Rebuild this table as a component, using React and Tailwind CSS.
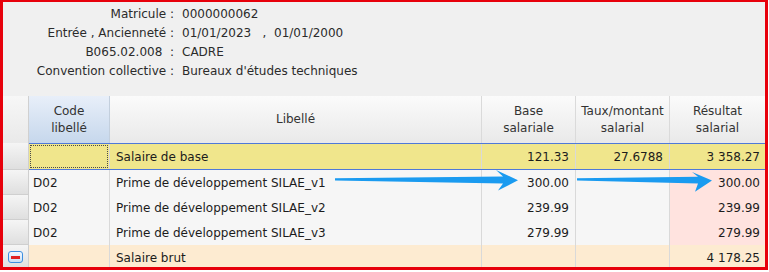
import React from 'react';

const info = [
  ['Matricule :', '0000000062'],
  ['Entrée , Ancienneté :', '01/01/2023   ,  01/01/2000'],
  ['B065.02.008  :', 'CADRE'],
  ['Convention collective :', "Bureaux d'études techniques"],
];

const rows = [
  { code: '', label: 'Salaire de base', base: '121.33', taux: '27.6788', res: '3 358.27', kind: 'base' },
  { code: 'D02', label: 'Prime de développement SILAE_v1', base: '300.00', taux: '', res: '300.00', kind: 'prime' },
  { code: 'D02', label: 'Prime de développement SILAE_v2', base: '239.99', taux: '', res: '239.99', kind: 'prime' },
  { code: 'D02', label: 'Prime de développement SILAE_v3', base: '279.99', taux: '', res: '279.99', kind: 'prime' },
  { code: '', label: 'Salaire brut', base: '', taux: '', res: '4 178.25', kind: 'brut' },
];

const cols = 'grid grid-cols-[26px_81px_372px_94px_94px_95px]';

const cellBg = (kind, isRes) => {
  if (kind === 'base') return 'bg-[#f0e68c]';
  if (kind === 'brut') return 'bg-[#fdebd1]';
  return isRes ? 'bg-[#ffe3df]' : 'bg-[#f6f6f6]';
};

function MinusIcon() {
  return (
    <div className="w-[15px] h-[12px] rounded-[3px] border border-[#3d8fe0] bg-linear-to-b from-[#f4f9ff] to-[#c9e0f7] flex items-center justify-center">
      <div className="w-[9px] h-[3px] bg-[#e02424]" />
    </div>
  );
}

function Row({ r }) {
  const sel = r.kind === 'base';
  const h = sel ? 'h-[27px] border-y border-[#4f79d9]' : 'h-[25px]';
  return (
    <div className={cols}>
      <div className={`${sel ? 'h-[27px]' : 'h-[25px]'} border-r border-b border-[#cfcfcf] bg-linear-to-b from-[#f5f5f5] to-[#dfdfdf] flex items-center justify-center`}>
        {r.kind === 'brut' && <MinusIcon />}
      </div>
      <div className={`col-span-5 grid grid-cols-[81px_372px_94px_94px_95px] ${h}`}>
        <div className={`${cellBg(r.kind)} border-r border-[#d9d9d9] flex items-center pl-[4px] relative`}>
          {sel && <div className="absolute left-[1px] right-[1px] top-[1px] bottom-[1px] border border-dotted border-[#4a4a4a]" />}
          {r.code}
        </div>
        <div className={`${cellBg(r.kind)} border-r border-[#d9d9d9] flex items-center pl-[6px]`}>{r.label}</div>
        <div className={`${cellBg(r.kind)} border-r border-[#d9d9d9] flex items-center justify-end pr-[6px]`}>{r.base}</div>
        <div className={`${cellBg(r.kind)} border-r border-[#d9d9d9] flex items-center justify-end pr-[6px]`}>{r.taux}</div>
        <div className={`${cellBg(r.kind, true)} flex items-center justify-end pr-[5px]`}>{r.res}</div>
      </div>
    </div>
  );
}

export default function App() {
  return (
    <div className="w-[769px] h-[272px] bg-white">
      <div className="relative w-[768px] h-[270px] border-red-600 border-l-[3px] border-r-[3px] border-t-2 border-b-[3px] bg-[#f0f0f0] overflow-hidden flex flex-col font-['DejaVu_Sans',sans-serif] text-[#1c1c1c]">
        {/* en-tête salarié */}
        <div className="h-[94px] shrink-0 pt-[3px] grid grid-cols-[171px_1fr] gap-x-[8px] content-start text-[12px] leading-[19px] text-[#2b2b2b]">
          {info.map(([k, v]) => (
            <React.Fragment key={k}>
              <div className="text-right whitespace-pre">{k}</div>
              <div className="whitespace-pre">{v}</div>
            </React.Fragment>
          ))}
        </div>

        {/* tableau */}
        <div className="text-[12px] shrink-0">
          <div className={`${cols} h-[47px] text-[#333] leading-[17px] text-center`}>
            <div className="border-r border-[#d0d0d0] bg-linear-to-b from-[#f7f7f7] to-[#e9e9e9]" />
            <div className="border-r border-[#c3cfdd] bg-linear-to-b from-[#e8eff9] to-[#c6d7ec] flex items-center justify-center">Code<br />libellé</div>
            <div className="border-r border-[#dadada] bg-linear-to-b from-[#fbfbfb] to-[#e9e9e9] flex items-center justify-center">Libellé</div>
            <div className="border-r border-[#dadada] bg-linear-to-b from-[#fbfbfb] to-[#e9e9e9] flex items-center justify-center">Base<br />salariale</div>
            <div className="border-r border-[#dadada] bg-linear-to-b from-[#fbfbfb] to-[#e9e9e9] flex items-center justify-center">Taux/montant<br />salarial</div>
            <div className="bg-linear-to-b from-[#fbfbfb] to-[#e9e9e9] flex items-center justify-center">Résultat<br />salarial</div>
          </div>
          {rows.map((r, i) => (
            <Row key={i} r={r} />
          ))}
        </div>

        {/* flèches */}
        <svg className="absolute left-[-3px] top-[-2px] pointer-events-none" width="769" height="272" viewBox="0 0 769 272">
          <polygon fill="#1a9bf0" points="335,178.2 503,176.6 496,170 518,180.3 498,190.6 503,183.4 335,180.4" />
          <polygon fill="#1a9bf0" points="577,178.2 698,176.8 692,172 712,180.5 695,191.8 698,183.6 577,180.4" />
        </svg>
      </div>
    </div>
  );
}
